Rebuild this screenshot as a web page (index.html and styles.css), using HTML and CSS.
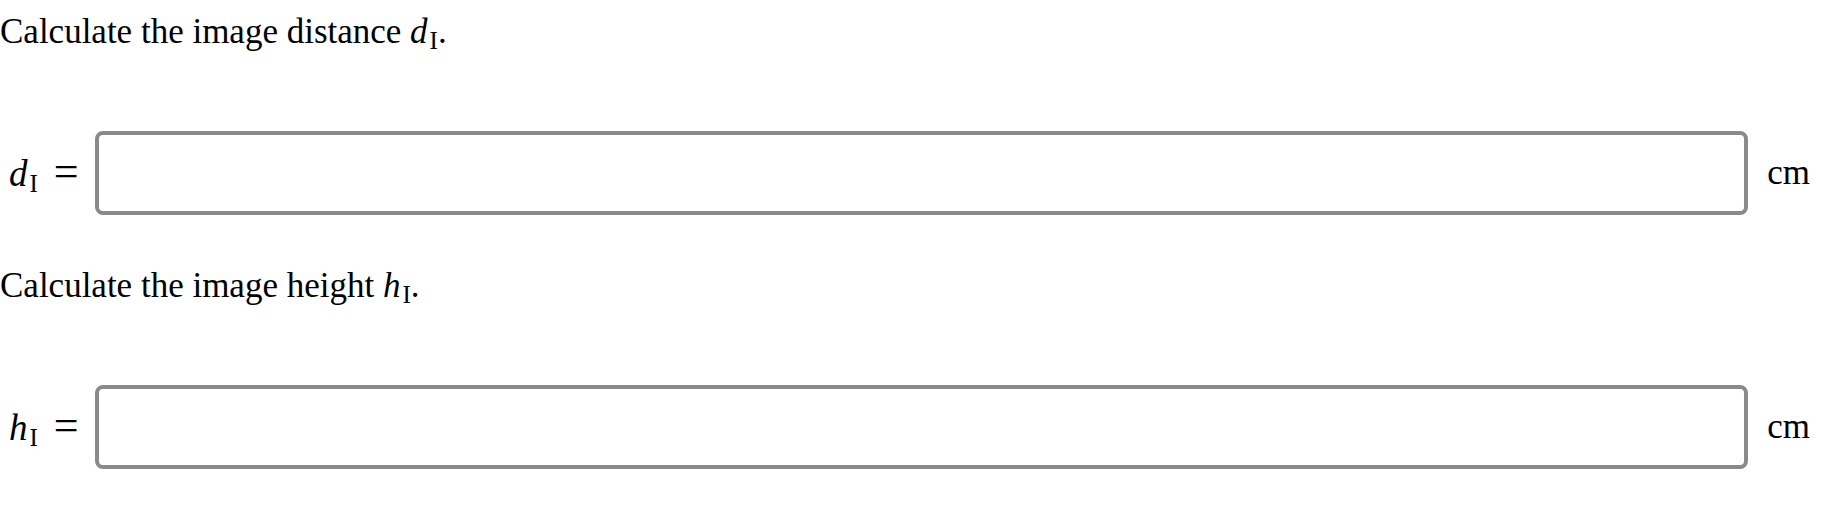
FILE: index.html
```html
<!DOCTYPE html>
<html lang="en">
  <head>
    <meta charset="UTF-8" />
    <title>Image distance and height</title>
    <link rel="stylesheet" href="styles.css">
  </head>
  <body>
    <div class="question">
      <p class="prompt">Calculate the image distance <span class="mvar">d</span><sub class="msub">I</sub>.</p>
      <div class="answer-row">
        <label class="answer-label" for="dist"><span class="mvar">d</span><sub class="msub">I</sub><span class="eq">=</span></label>
        <input class="answer-box" id="dist" type="text" />
        <span class="unit">cm</span>
      </div>
    </div>

    <div class="question">
      <p class="prompt">Calculate the image height <span class="mvar">h</span><sub class="msub">I</sub>.</p>
      <div class="answer-row">
        <label class="answer-label" for="height"><span class="mvar">h</span><sub class="msub">I</sub><span class="eq">=</span></label>
        <input class="answer-box" id="height" type="text" />
        <span class="unit">cm</span>
      </div>
    </div>
  </body>
</html>
```

FILE: styles.css
```css
html,
body {
  background: #fff;
}
body {
  margin: 0;
  font-family: "Liberation Serif", "Times New Roman", serif;
  font-size: 35px;
  line-height: 40px;
  color: #000;
}

.question {
  padding-top: 12px;
}
.question + .question {
  padding-top: 51px;
}

.prompt {
  margin: 0 0 79px;
}

.mvar {
  font-style: italic;
}
.msub {
  font-family: "Liberation Serif", serif;
  font-size: 25px;
  line-height: 0;
  vertical-align: -6px;
  margin-left: 2px;
}

.answer-row {
  display: flex;
  align-items: center;
}
.answer-label {
  width: 86px;
  padding-left: 9px;
  white-space: nowrap;
  font-size: 37px;
}
.eq {
  font-size: 44px;
  margin-left: 16px;
}

.answer-box {
  flex: 1;
  height: 84px;
  box-sizing: border-box;
  border: 4px solid #8a8a8a;
  border-radius: 8px;
  background: #fff;
  margin: 0;
  padding: 0 12px;
  font: inherit;
  outline: 0;
}

.unit {
  margin-left: 19px;
  margin-right: 24px;
}
```
